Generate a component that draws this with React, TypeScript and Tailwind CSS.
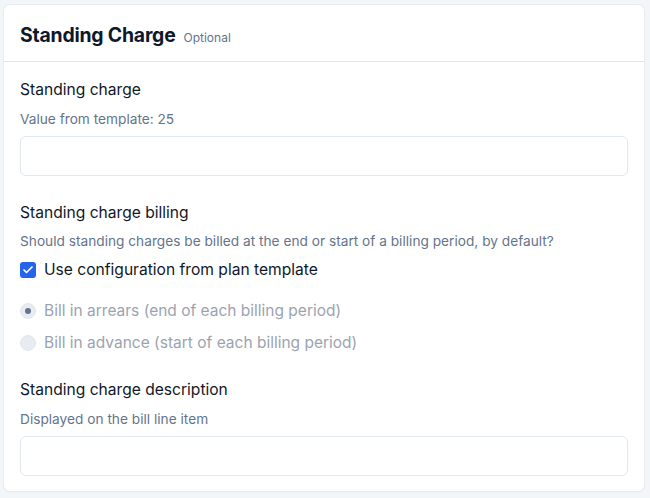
import { Check } from 'lucide-react';

function Helper({ children }: { children: React.ReactNode }) {
  return <p className="text-[13.7px] leading-5 text-[#64748b]">{children}</p>;
}

function Radio({ checked, label }: { checked?: boolean; label: string }) {
  return (
    <div className="flex items-center gap-2 h-6">
      <span className="w-4 h-4 rounded-full bg-[#e8ecf2] border border-[#e2e8f0] flex items-center justify-center">
        {checked && <span className="w-1.5 h-1.5 rounded-full bg-[#64748b]" />}
      </span>
      <span className="text-[15.5px] text-[#9ca3af]">{label}</span>
    </div>
  );
}

export default function App() {
  return (
    <div className="min-h-[498px] bg-[#f3f6f9] px-1 pt-[5px] pb-[6px]" style={{ fontFamily: 'Inter, "Noto Sans", sans-serif' }}>
      <div className="w-[640px] bg-white rounded-md shadow-[0_0_0_1px_#e8ecf1,0_1px_2px_rgba(0,0,0,0.06)]">
        <div className="h-[57px] px-4 pt-[6px] flex items-center gap-2 border-b border-[#e2e4ec]">
          <h2 className="text-[19.4px] font-bold text-[#0f172a] tracking-[-0.2px]">Standing Charge</h2>
          <span className="text-[12px] text-[#64748b] mt-1">Optional</span>
        </div>
        <div className="px-4 pt-4 pb-[15px]">
          <label className="block text-[15.6px] leading-6 text-[#111827]">Standing charge</label>
          <div className="mt-[7px]"><Helper>Value from template: 25</Helper></div>
          <input className="mt-[7px] block w-full h-10 rounded-md border border-[#e2e8f0] bg-white outline-none" />

          <label className="mt-[25px] block text-[15.6px] leading-6 text-[#111827]">Standing charge billing</label>
          <div className="mt-[6px]"><Helper>Should standing charges be billed at the end or start of a billing period, by default?</Helper></div>
          <div className="mt-[7px] flex items-center gap-2 h-6">
            <span className="w-4 h-4 rounded-[3px] bg-[#2563eb] flex items-center justify-center">
              <Check size={12} strokeWidth={3.5} className="text-white" />
            </span>
            <span className="text-[15.6px] text-[#111827]">Use configuration from plan template</span>
          </div>
          <div className="mt-[17px] flex flex-col gap-2">
            <Radio checked label="Bill in arrears (end of each billing period)" />
            <Radio label="Bill in advance (start of each billing period)" />
          </div>

          <label className="mt-[23px] block text-[15.6px] leading-6 text-[#111827]">Standing charge description</label>
          <div className="mt-[7px]"><Helper>Displayed on the bill line item</Helper></div>
          <input className="mt-[7px] block w-full h-10 rounded-md border border-[#e2e8f0] bg-white outline-none" />
        </div>
      </div>
    </div>
  );
}
